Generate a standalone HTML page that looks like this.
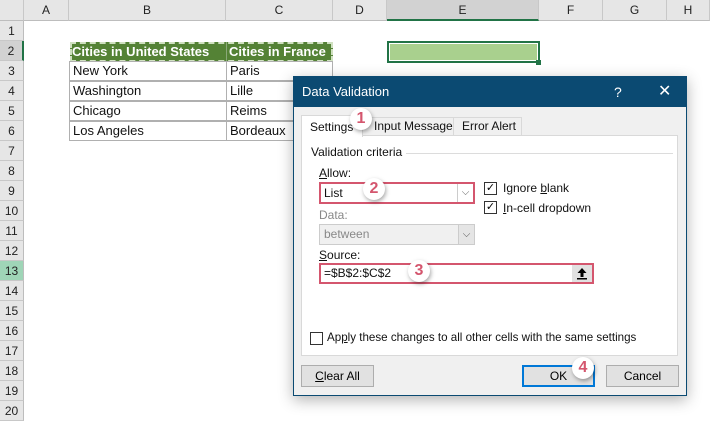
<!DOCTYPE html><html><head><style>
*{box-sizing:border-box;margin:0;padding:0}
body{width:710px;height:408px;overflow:hidden;background:#fff;font-family:"Liberation Sans",sans-serif;position:relative}
.a{position:absolute}
.ch{top:0;height:21px;background:#e6e6e6;border-right:1px solid #c8c8c8;border-bottom:1px solid #bdbdbd;font-size:12px;color:#222;text-align:center;line-height:21px}
.rh{left:0;width:24px;height:20px;background:#e6e6e6;border-bottom:1px solid #c8c8c8;border-right:1px solid #bdbdbd;font-size:12px;color:#222;text-align:center;line-height:20px}
.c{height:20px;border:1px solid #b0b0b0;font-size:13px;line-height:18px;padding-left:3px;color:#111;margin:-1px 0 0 -1px}
.d{font-size:12px;color:#111}
.badge{width:22px;height:22px;border-radius:50%;background:#fff;box-shadow:1px 2px 4px rgba(0,0,0,.35);color:#d4566e;font-weight:bold;font-size:16px;text-align:center;line-height:22px}
.cb{width:13px;height:13px;border:1px solid #333;background:#fff}
.btn{height:22px;border:1px solid #adadad;background:#e1e1e1;font-size:12px;text-align:center;line-height:20px}
</style></head><body>
<div class="a ch" style="left:0;width:24px;background:#e6e6e6"></div>
<div class="a ch" style="left:24px;width:45px">A</div>
<div class="a ch" style="left:69px;width:157px">B</div>
<div class="a ch" style="left:226px;width:107px">C</div>
<div class="a ch" style="left:333px;width:54px">D</div>
<div class="a ch" style="left:387px;width:152px;background:#d2d2d2;border-bottom:2px solid #217346">E</div>
<div class="a ch" style="left:539px;width:64px">F</div>
<div class="a ch" style="left:603px;width:64px">G</div>
<div class="a ch" style="left:667px;width:43px">H</div>
<div class="a rh" style="top:21px">1</div>
<div class="a rh" style="top:41px;background:#d2d2d2;border-right:2px solid #217346">2</div>
<div class="a rh" style="top:61px">3</div><div class="a rh" style="top:81px">4</div><div class="a rh" style="top:101px">5</div><div class="a rh" style="top:121px">6</div><div class="a rh" style="top:141px">7</div><div class="a rh" style="top:161px">8</div><div class="a rh" style="top:181px">9</div><div class="a rh" style="top:201px">10</div><div class="a rh" style="top:221px">11</div><div class="a rh" style="top:241px">12</div>
<div class="a rh" style="top:261px;background:#9fd5b7">13</div>
<div class="a rh" style="top:281px">14</div><div class="a rh" style="top:301px">15</div><div class="a rh" style="top:321px">16</div><div class="a rh" style="top:341px">17</div><div class="a rh" style="top:361px">18</div><div class="a rh" style="top:381px">19</div><div class="a rh" style="top:401px">20</div>
<div class="a" style="left:70px;top:42px;width:263px;height:20px;background:#548235;border:2px dashed #cfe0c0"></div>
<div class="a" style="left:72px;top:42px;font-size:13px;font-weight:bold;color:#fff;line-height:20px">Cities in United States</div>
<div class="a" style="left:226px;top:42px;width:1px;height:20px;background:#8aa878"></div>
<div class="a" style="left:229px;top:42px;font-size:13px;font-weight:bold;color:#fff;line-height:20px">Cities in France</div>
<div class="a c" style="left:70px;top:62px;width:158px">New York</div><div class="a c" style="left:227px;top:62px;width:107px">Paris</div>
<div class="a c" style="left:70px;top:82px;width:158px">Washington</div><div class="a c" style="left:227px;top:82px;width:107px">Lille</div>
<div class="a c" style="left:70px;top:102px;width:158px">Chicago</div><div class="a c" style="left:227px;top:102px;width:107px">Reims</div>
<div class="a c" style="left:70px;top:122px;width:158px">Los Angeles</div><div class="a c" style="left:227px;top:122px;width:107px">Bordeaux</div>
<div class="a" style="left:387px;top:41px;width:153px;height:22px;border:2px solid #217346;background:#a9d08e;box-shadow:inset 0 0 0 1px #fff"></div>
<div class="a" style="left:536px;top:60px;width:5px;height:5px;background:#217346"></div>
<div class="a" style="left:293px;top:76px;width:394px;height:320px;background:#f0f0f0;border:1px solid #0b4a72;box-shadow:0 4px 14px rgba(0,0,0,.3)">
<div class="a" style="left:0;top:0;width:392px;height:30px;background:#0b4a72;color:#fff;font-size:13px;line-height:30px;padding-left:8px">Data Validation<span class="a" style="left:320px;font-size:14px">?</span><span class="a" style="left:364px;font-size:16px">✕</span></div>
<div class="a" style="left:7px;top:58px;width:377px;height:221px;background:#fff;border:1px solid #d9d9d9"></div>
<div class="a d" style="left:67px;top:40px;width:93px;height:19px;border:1px solid #d9d9d9;background:#f0f0f0;line-height:17px;padding-left:12px;font-size:12px">Input Message</div>
<div class="a d" style="left:159px;top:40px;width:69px;height:19px;border:1px solid #d9d9d9;background:#f0f0f0;line-height:17px;padding-left:8px">Error Alert</div>
<div class="a d" style="left:7px;top:38px;width:62px;height:22px;border:1px solid #d9d9d9;border-bottom:none;background:#fff;line-height:22px;padding-left:8px">Settings</div>
<div class="a d" style="left:17px;top:68px">Validation criteria</div>
<div class="a" style="left:112px;top:76px;width:267px;height:1px;background:#dcdcdc"></div>
<div class="a d" style="left:25px;top:89px"><u>A</u>llow:</div>
<div class="a d" style="left:25px;top:105px;width:156px;height:22px;border:2px solid #d4566e;background:#fff;line-height:18px;padding-left:3px">List<span class="a" style="right:0;top:0;width:16px;height:18px;border-left:1px solid #ccc;color:#666;text-align:center;font-size:10px">⌵</span></div>
<div class="a cb" style="left:190px;top:105px;font-size:11px;line-height:11px;text-align:center">✓</div><div class="a d" style="left:209px;top:104px;font-size:12px">Ignore <u>b</u>lank</div>
<div class="a cb" style="left:190px;top:124px;font-size:11px;line-height:11px;text-align:center">✓</div><div class="a d" style="left:209px;top:124px"><u>I</u>n-cell dropdown</div>
<div class="a d" style="left:25px;top:131px;color:#888">Data:</div>
<div class="a d" style="left:25px;top:147px;width:156px;height:21px;border:1px solid #ccc;background:#f0f0f0;color:#888;line-height:19px;padding-left:4px">between<span class="a" style="right:0;top:0;width:16px;height:19px;border-left:1px solid #ccc;background:#e5e5e5;text-align:center;font-size:10px;color:#555">⌵</span></div>
<div class="a d" style="left:25px;top:171px"><u>S</u>ource:</div>
<div class="a d" style="left:25px;top:186px;width:275px;height:21px;border:2px solid #d4566e;background:#fff;line-height:17px;padding-left:3px">=$B$2:$C$2<span class="a" style="right:0;top:0;width:20px;height:17px;background:#e1e1e1"><svg width="20" height="17" viewBox="0 0 20 17"><path d="M10 3 L14.5 8 H11.5 V12 H8.5 V8 H5.5 Z" fill="#000"/><rect x="5" y="13" width="10" height="1.5" fill="#000"/></svg></span></div>
<div class="a cb" style="left:16px;top:255px"></div><div class="a d" style="left:33px;top:254px;font-size:11.6px">Ap<u>p</u>ly these changes to all other cells with the same settings</div>
<div class="a btn" style="left:7px;top:288px;width:73px"><u>C</u>lear All</div>
<div class="a btn" style="left:228px;top:288px;width:73px;border:2px solid #0078d7;line-height:18px">OK</div>
<div class="a btn" style="left:312px;top:288px;width:73px">Cancel</div>
</div>
<div class="a badge" style="left:350px;top:108px">1</div>
<div class="a badge" style="left:363px;top:178px">2</div>
<div class="a badge" style="left:408px;top:260px">3</div>
<div class="a badge" style="left:572px;top:357px">4</div>
</body></html>
